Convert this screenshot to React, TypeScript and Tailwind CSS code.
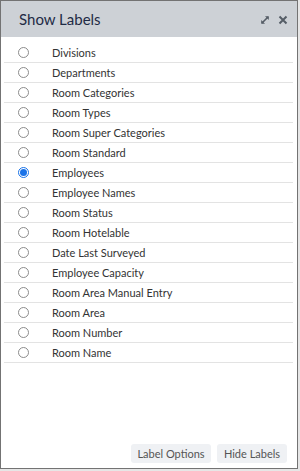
import React from "react";

const items = [
  "Divisions",
  "Departments",
  "Room Categories",
  "Room Types",
  "Room Super Categories",
  "Room Standard",
  "Employees",
  "Employee Names",
  "Room Status",
  "Room Hotelable",
  "Date Last Surveyed",
  "Employee Capacity",
  "Room Area Manual Entry",
  "Room Area",
  "Room Number",
  "Room Name",
];

function Radio({ checked }: { checked: boolean }) {
  return checked ? (
    <span className="flex h-[11px] w-[11px] items-center justify-center rounded-full border border-[#1a73e8] bg-white">
      <span className="h-[7px] w-[7px] rounded-full bg-[#1a73e8]" />
    </span>
  ) : (
    <span className="h-[11px] w-[11px] rounded-full border border-[#8c8c8c] bg-white" />
  );
}

export default function App() {
  return (
    <div className="h-[471px] w-[300px] bg-[#e6e6e6]" style={{ fontFamily: 'Lato, "Open Sans", sans-serif' }}>
      <div className="flex h-[469px] w-[298px] flex-col border border-[#737373] bg-white">
        <div className="flex h-[36px] items-center justify-between bg-[#cdd1d6] pl-[18px] pr-[9px]">
          <span className="text-[15px] leading-none text-[#1f2b45]">Show Labels</span>
          <div className="flex items-center gap-[8px] pt-[1px]">
            <svg width="10" height="10" viewBox="0 0 10 10" className="text-[#555d66]">
              <path d="M2 8 L8 2" stroke="currentColor" strokeWidth="1.6" />
              <path d="M5 1.2 L8.8 1.2 L8.8 5 Z" fill="currentColor" />
              <path d="M1.2 5 L1.2 8.8 L5 8.8 Z" fill="currentColor" />
            </svg>
            <svg width="10" height="10" viewBox="0 0 10 10" className="text-[#555d66]">
              <path d="M1.5 1.5 L8.5 8.5 M8.5 1.5 L1.5 8.5" stroke="currentColor" strokeWidth="2" />
            </svg>
          </div>
        </div>
        <div className="flex flex-col pl-[3px] pr-[4px] pt-[6px]">
          {items.map((label) => (
            <div key={label} className="flex h-[20px] items-center border-b border-[#e3e3e3]">
              <div className="ml-[14px] flex w-[34px] items-center">
                <Radio checked={label === "Employees"} />
              </div>
              <span className="text-[11px] leading-none text-[#333]">{label}</span>
            </div>
          ))}
        </div>
        <div className="flex-1" />
        <div className="flex justify-end gap-[6px] pb-[5px] pr-[10px]">
          <button className="h-[19px] w-[80px] rounded-[3px] bg-[#eff1f4] text-[11px] leading-none text-[#555]">
            Label Options
          </button>
          <button className="h-[19px] w-[70px] rounded-[3px] bg-[#eff1f4] text-[11px] leading-none text-[#555]">
            Hide Labels
          </button>
        </div>
      </div>
    </div>
  );
}
